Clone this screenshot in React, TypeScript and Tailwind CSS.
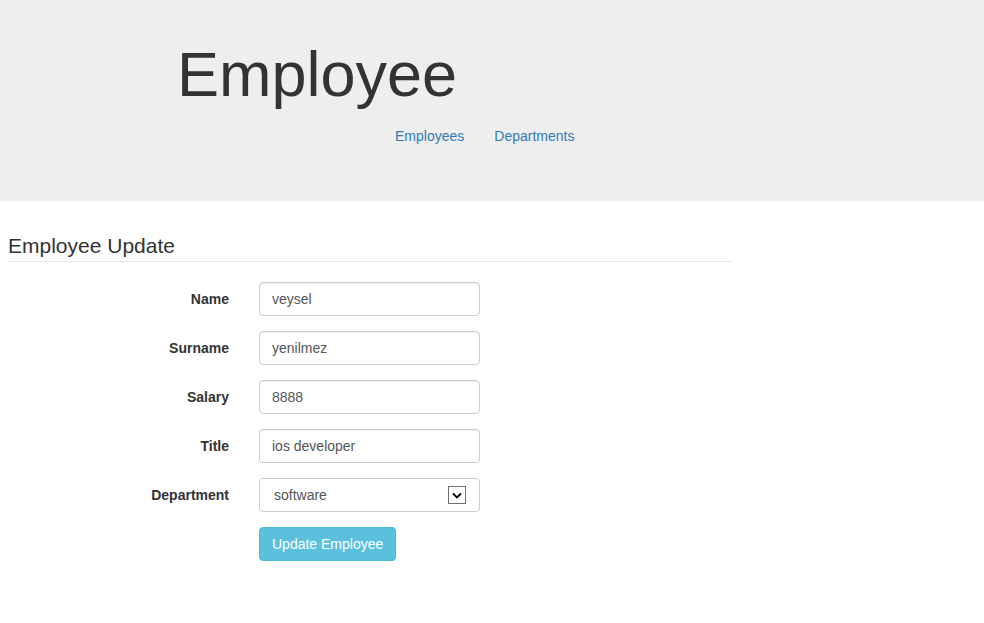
import React from 'react';

const fields = [
  { label: 'Name', value: 'veysel' },
  { label: 'Surname', value: 'yenilmez' },
  { label: 'Salary', value: '8888' },
  { label: 'Title', value: 'ios developer' },
];

const Row: React.FC<{ label: string; children: React.ReactNode }> = ({ label, children }) => (
  <div className="flex items-center mb-[15px]">
    <label className="w-[221px] text-right text-[14px] font-bold text-[#333]">{label}</label>
    <div className="ml-[30px]">{children}</div>
  </div>
);

export default function App() {
  return (
    <div className="min-h-screen bg-white text-[#333]" style={{ fontFamily: '"Liberation Sans", Arial, sans-serif' }}>
      <div className="h-[201px] bg-[#eee] pt-[40px]">
        <h1 className="pl-[177px] text-[63px] leading-[1.1] text-[#333] font-normal">Employee</h1>
        <nav className="flex pl-[380px] mt-[17px]">
          <a className="px-[15px] text-[14px] leading-[20px] text-[#337ab7]">Employees</a>
          <a className="px-[15px] text-[14px] leading-[20px] text-[#337ab7]">Departments</a>
        </nav>
      </div>

      <div className="px-[8px] pt-[30px]">
        <div className="w-[724px] border-b border-[#e5e5e5] text-[21px] leading-[30px] text-[#333] mb-[20px]">
          Employee Update
        </div>

        {fields.map((f) => (
          <Row key={f.label} label={f.label}>
            <div className="w-[221px] h-[34px] border border-[#ccc] rounded-[4px] px-[12px] flex items-center text-[14px] text-[#555] shadow-[inset_0_1px_1px_rgba(0,0,0,0.075)]">
              {f.value}
            </div>
          </Row>
        ))}

        <Row label="Department">
          <div className="w-[221px] h-[34px] border border-[#ccc] rounded-[4px] pl-[14px] pr-[13px] flex items-center justify-between text-[14px] text-[#555]">
            <span>software</span>
            <span className="w-[18px] h-[18px] border border-[#707070] bg-white flex items-center justify-center">
              <svg width="10" height="7" viewBox="0 0 10 7">
                <path d="M1 1.5 L5 5.5 L9 1.5" stroke="#000" strokeWidth="1.8" fill="none" />
              </svg>
            </span>
          </div>
        </Row>

        <div className="ml-[251px]">
          <button className="h-[34px] px-[12px] rounded-[4px] bg-[#5bc0de] border border-[#46b8da] text-white text-[14px]">
            Update Employee
          </button>
        </div>
      </div>
    </div>
  );
}
